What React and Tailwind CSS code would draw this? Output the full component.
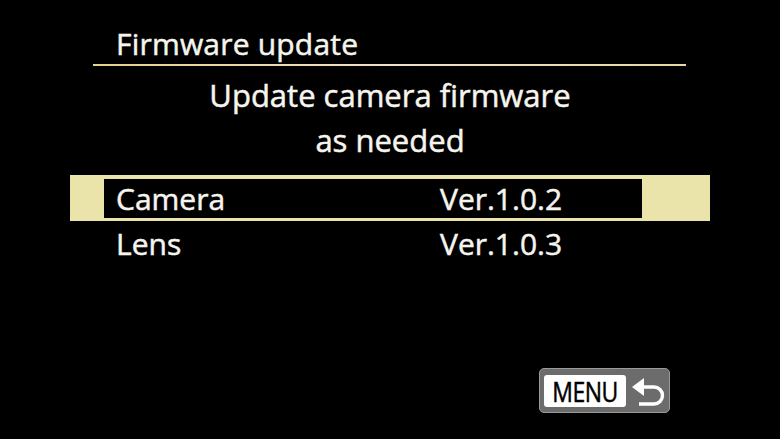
const Row = ({ label, version }) => (
    <div className="grid grid-cols-[324px_1fr] pl-3">
        <span>{label}</span>
        <span>{version}</span>
    </div>
);

const ReturnArrow = () => (
    <svg width="33" height="29" viewBox="0 0 33 29" className="block mt-[2px]">
        <polygon points="0,10 12,1 12,19" fill="#ffffff" />
        <path d="M11 10 H22 A8.5 8.5 0 0 1 22 27 H7" fill="none" stroke="#ffffff" strokeWidth="3.4" />
    </svg>
);

export default function App() {
    return (
        <div
            className="h-[439px] w-[780px] bg-black text-[#f5f5ee] [-webkit-text-stroke:0.5px_#f5f5ee] flex flex-col overflow-hidden"
            style={{ fontFamily: '"Open Sans", "Noto Sans", sans-serif' }}
        >
            {/* Title */}
            <div className="mt-[21px] ml-[93px] w-[593px]">
                <div className="h-[43px] pl-[23px] text-[30px] leading-[45px] tracking-[0.2px]">Firmware update</div>
                <div className="h-[2px] bg-gradient-to-r from-[#e2d28a] via-[#f2e0c4] to-[#e6d9a2]" />
            </div>

            {/* Message */}
            <div className="mt-[7px] text-center text-[31px] leading-[45px]">
                <p>Update camera firmware</p>
                <p>as needed</p>
            </div>

            {/* Version list */}
            <div className="mt-[12px] ml-[70px] w-[640px] text-[30px]">
                <div className="bg-[#ebe4aa] pt-[4px] pb-[3px] pl-[34px] pr-[68px]">
                    <div className="h-[39px] bg-black leading-[39px]">
                        <Row label="Camera" version="Ver.1.0.2" />
                    </div>
                </div>
                <div className="leading-[45px] pl-[34px]">
                    <Row label="Lens" version="Ver.1.0.3" />
                </div>
            </div>

            {/* Menu button */}
            <div className="mt-auto mb-[26px] ml-[539px] w-[131px] h-[45px] rounded-[5px] bg-[#6c6c6c] border border-[#9a9a9a] flex items-center pl-[4px] gap-[6px]">
                <div className="w-[82px] h-[32px] rounded-[3px] bg-white text-black [-webkit-text-stroke:0.4px_#000] text-[23px] leading-[32px] text-center tracking-[-0.5px]">
                    <span className="inline-block scale-y-[1.2]">MENU</span>
                </div>
                <ReturnArrow />
            </div>
        </div>
    );
}
